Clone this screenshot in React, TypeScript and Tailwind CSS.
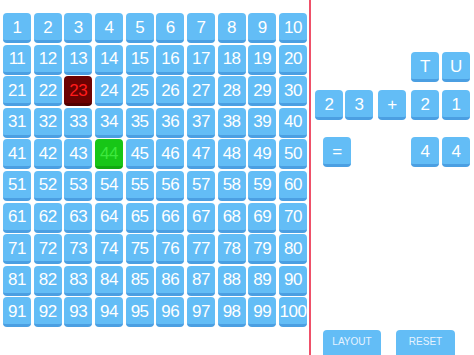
import React from 'react'

const numbers = Array.from({ length: 100 }, (_, i) => i + 1)

function Tile({ label, tone = 'blue', className = '' }: { label: string; tone?: 'blue' | 'red' | 'green'; className?: string }) {
  const tones = {
    blue: 'bg-[#63bdf6] border-[#4b9fe2] text-white',
    red: 'bg-[#6c0202] border-[#520000] text-[#ff1c1c]',
    green: 'bg-[#17c617] border-[#10a810] text-[#3ee83e]',
  }
  return (
    <div
      className={`flex h-[30px] w-[28px] shrink-0 items-center justify-center rounded-[4px] border-b-[3px] pt-[1px] text-[17px] leading-none tracking-[-0.5px] ${tones[tone]} ${className}`}
    >
      {label}
    </div>
  )
}

export default function App() {
  return (
    <div
      className="flex h-[355px] w-[474px] overflow-hidden bg-white"
      style={{ fontFamily: '"Liberation Sans", Arial, sans-serif' }}
    >
      {/* Number board */}
      <div className="w-[309px] shrink-0 pl-[3px] pt-[13px]">
        <div className="grid grid-cols-[repeat(10,28px)] gap-x-[2.67px] gap-y-[1.6px]">
          {numbers.map((n) => (
            <Tile key={n} label={String(n)} tone={n === 23 ? 'red' : n === 44 ? 'green' : 'blue'} />
          ))}
        </div>
      </div>

      {/* Divider */}
      <div className="h-full w-[2px] shrink-0 bg-[#ef5069]" />

      {/* Working area */}
      <div className="flex flex-1 flex-col">
        <div className="flex pt-[52px]">
          <Tile label="T" className="ml-[100px]" />
          <Tile label="U" className="ml-[3px]" />
        </div>
        <div className="flex pt-[8px]">
          <Tile label="2" className="ml-[4px]" />
          <Tile label="3" className="ml-[2px]" />
          <Tile label="+" className="ml-[5px]" />
          <Tile label="2" className="ml-[5px]" />
          <Tile label="1" className="ml-[3px]" />
        </div>
        <div className="flex pt-[17px]">
          <Tile label="=" className="ml-[12px]" />
          <Tile label="4" className="ml-[60px]" />
          <Tile label="4" className="ml-[3px]" />
        </div>
        <div className="mt-auto flex gap-[15px] pl-[12px]">
          <button className="h-[28px] w-[58px] translate-y-[3px] rounded-t-[4px] bg-[#63bdf6] pb-[6px] text-[10px] text-[#e6f3ff]">
            LAYOUT
          </button>
          <button className="h-[28px] w-[59px] translate-y-[3px] rounded-t-[4px] bg-[#63bdf6] pb-[6px] text-[10px] text-[#e6f3ff]">
            RESET
          </button>
        </div>
      </div>
    </div>
  )
}
